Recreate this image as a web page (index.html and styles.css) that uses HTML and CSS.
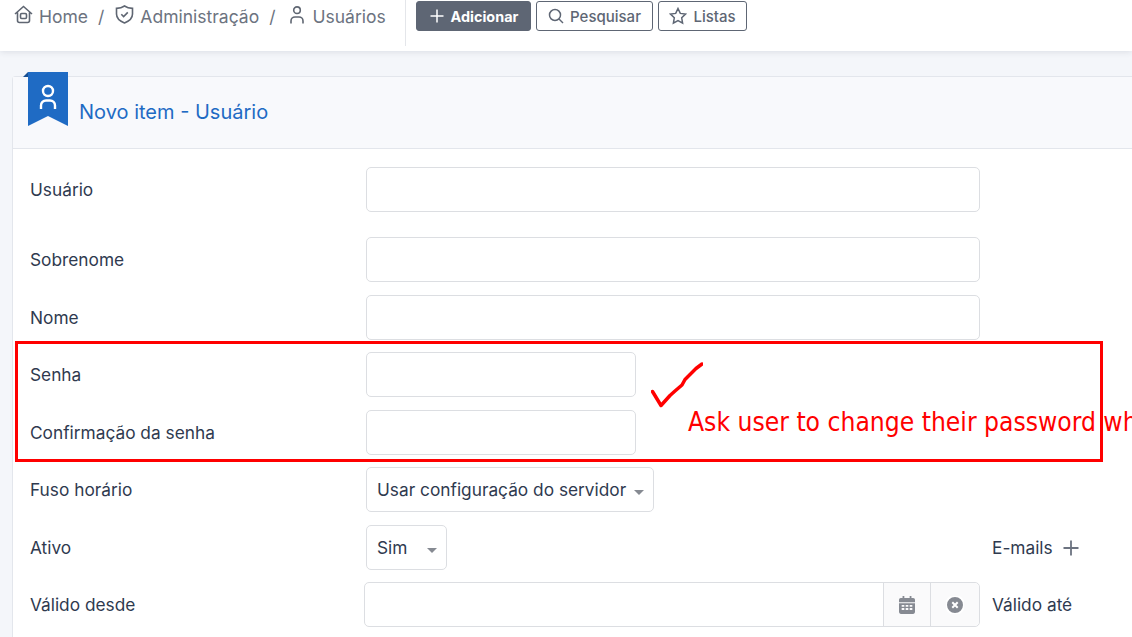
FILE: index.html
```html
<!DOCTYPE html>
<html lang="pt">
<head>
<meta charset="utf-8">
<title>Novo item - Usuário</title>
<link rel="stylesheet" href="styles.css">
</head>
<body>
<header class="topbar">
  <nav class="crumbs">
    <span class="crumb">
      <svg class="crumb-icon" viewBox="0 0 19 19"><path d="M1 9 9.500 1.500 18 9M3.500 7.500v8a2 2 0 0 0 2 2h8a2 2 0 0 0 2-2v-8"/><rect x="6.500" y="8.500" width="6" height="5" rx="1.200"/></svg>
      Home</span>
    <span class="sep sep-a">/</span>
    <span class="crumb">
      <svg class="crumb-icon" viewBox="0 0 19 19"><path d="M9.500 1c2.200 1.500 4.800 2.300 8 2.400v5.600c0 4-3 7-8 9-5-2-8-5-8-9V3.400c3.200-.1 5.800-.9 8-2.400z"/><path d="m6.300 9.300 2.300 2.300 4.200-4.200"/></svg>
      Administração</span>
    <span class="sep sep-b">/</span>
    <span class="crumb crumb-user">
      <svg class="crumb-icon person" viewBox="0 0 14 18"><circle cx="7" cy="4.200" r="3.300"/><path d="M1 17.500v-2.500a4 4 0 0 1 4-4h4a4 4 0 0 1 4 4v2.500"/></svg>
      Usuários</span>
  </nav>
  <div class="actions">
    <button class="btn btn-primary"><svg class="btn-icon" viewBox="0 0 16 16"><path d="M8 1.500v13M1.500 8h13"/></svg>Adicionar</button>
    <button class="btn btn-search"><svg class="btn-icon" viewBox="0 0 16 16"><circle cx="7" cy="7" r="5.500"/><path d="m11 11 4 4"/></svg>Pesquisar</button>
    <button class="btn btn-lists"><svg class="btn-icon star" viewBox="0 0 18 18"><path d="m9 1.500 2.300 4.900 5.200.7-3.800 3.700.9 5.300L9 13.500l-4.600 2.600.9-5.300L1.500 7.100l5.200-.7z"/></svg>Listas</button>
  </div>
</header>

<main class="content">
  <section class="card">
    <i class="ribbon-fold"></i>
    <div class="ribbon">
      <svg viewBox="0 0 20 26" class="ribbon-icon"><circle cx="10" cy="7" r="5"/><path d="M3 25v-3.500a5 5 0 0 1 5-5h4a5 5 0 0 1 5 5V25"/></svg>
    </div>
    <div class="card-head"><h1>Novo item - Usuário</h1></div>
    <form class="form">
      <div class="row row-first"><label>Usuário</label><input class="field wide"></div>
      <div class="row"><label>Sobrenome</label><input class="field wide"></div>
      <div class="row"><label>Nome</label><input class="field wide"></div>
      <div class="row"><label>Senha</label><input class="field narrow" type="password"></div>
      <div class="row"><label>Confirmação da senha</label><input class="field narrow" type="password"></div>
      <div class="row"><label>Fuso horário</label><div class="field select tz">Usar configuração do servidor<i class="caret"></i></div></div>
      <div class="row"><label>Ativo</label><div class="field select yes">Sim<i class="caret"></i></div><span class="side side-mail">E-mails<svg class="plus" viewBox="0 0 16 16"><path d="M8 .5v15M.5 8h15"/></svg></span></div>
      <div class="row row-date"><label>Válido desde</label>
        <div class="field date">
          <span class="date-main"></span>
          <span class="date-btn"><svg viewBox="0 0 18 20" class="cal"><path d="M4 0h2v2h6V0h2v2h2a2 2 0 0 1 2 2v3H0V4a2 2 0 0 1 2-2h2zM0 8h18v10a2 2 0 0 1-2 2H2a2 2 0 0 1-2-2zm3 2v2h3v-2zm4.500 0v2h3v-2zM12 10v2h3v-2zM3 13.500v2h3v-2zm4.500 0v2h3v-2zm4.500 0v2h3v-2z" fill-rule="evenodd"/></svg></span>
          <span class="date-btn"><svg viewBox="0 0 18 18" class="clear"><circle cx="9" cy="9" r="9"/><path d="m6.300 6.300 5.400 5.400m0-5.400-5.400 5.400"/></svg></span>
        </div>
        <span class="side">Válido até</span>
      </div>
    </form>
  </section>
</main>

<div class="redbox"></div>
<svg class="tick" viewBox="0 0 52 46"><path d="M1.500 29.500 10 43.500 19 33.500 24 29 31 23 34 17.500 39 12.500 45 6.500 51 2"/></svg>
<div class="note">Ask user to change their password wh</div>
</body>
</html>
```
FILE: styles.css
```css
* { box-sizing: border-box; }
html, body { margin: 0; height: 637px; overflow: hidden; }
body {
  position: relative;
  background: #f4f6fa;
  font-family: Inter, "Liberation Sans", sans-serif;
  color: #2f3a4f;
}
.topbar {
  height: 51px;
  background: #fff;
  box-shadow: 0 1px 6px rgba(40, 50, 70, .12);
  display: flex;
  align-items: flex-start;
  padding-left: 14px;
}
.crumbs {
  width: 392px;
  height: 46px;
  border-right: 1px solid #e4e6ea;
  display: flex;
  align-items: flex-start;
  padding-top: 5px;
  color: #6c7380;
  font-size: 17.500px;
  line-height: 24px;
  white-space: nowrap;
}
.crumb { display: flex; align-items: flex-start; gap: 6px; }
.crumb-user { gap: 8px; }
.crumb-icon {
  width: 19px; height: 19px;
  fill: none;
  stroke: #5f6672;
  stroke-width: 1.600;
}
.person { width: 14px; height: 18px; margin-top: 1px; }
.sep-a { margin: 0 11px 0 10px; }
.sep-b { margin: 0 15px 0 10px; }
.actions { display: flex; gap: 5px; margin-left: 10px; padding-top: 1px; }
.btn {
  height: 30px;
  border: 1px solid #5e6674;
  border-radius: 3px;
  background: #fff;
  color: #5e6674;
  font: 500 15px Inter, "Liberation Sans", sans-serif;
  display: flex;
  align-items: center;
  justify-content: center;
  gap: 6px;
  padding: 0;
}
.btn-primary { width: 115px; background: #5e6674; color: #fff; font-weight: 700; font-size: 14.400px; }
.btn-search { width: 117px; }
.btn-lists { width: 89px; }
.btn-icon { width: 16px; height: 16px; fill: none; stroke: currentColor; stroke-width: 1.500; }
.star { width: 18px; height: 18px; }

.content { padding: 25px 0 0 12px; }
.card {
  position: relative;
  width: 1120px;
  background: #fff;
  border: 1px solid #e3e6ec;
  border-right: 0;
  border-bottom: 0;
  border-radius: 4px 0 0 0;
  padding-bottom: 10px;
}
.card-head {
  height: 72px;
  background: #f8f9fc;
  border-bottom: 1px solid #e3e6ec;
  padding: 22px 0 0 66px;
}
.card-head h1 {
  margin: 0;
  font-size: 20px;
  line-height: 26px;
  font-weight: 400;
  color: #1f6bc4;
}
.ribbon-fold {
  position: absolute;
  left: 10px;
  top: -5px;
  border-bottom: 5px solid #174f92;
  border-left: 5px solid transparent;
}
.ribbon {
  position: absolute;
  left: 15px;
  top: -5px;
  width: 40px;
  height: 54px;
  background: #1f6bc4;
  clip-path: polygon(0 0, 100% 0, 100% 100%, 50% 81.500%, 0 100%);
  display: flex;
  justify-content: center;
  padding-top: 12px;
}
.ribbon-icon { width: 20px; height: 26px; fill: none; stroke: #fff; stroke-width: 2.400; }
.form { padding-top: 6px; }
.row {
  position: relative;
  height: 45px;
  margin-top: 12.500px;
  display: flex;
  align-items: center;
  font-size: 17.300px;
}
.row-first { margin-top: 12px; margin-bottom: 25px; }
.row-first + .row { margin-top: 0; }
.row label { width: 353px; padding-left: 17px; flex: none; }
.field {
  height: 45px;
  background: #fff;
  border: 1px solid #dcdee2;
  border-radius: 5px;
  font-size: 17.300px;
  color: #2f3a4f;
  outline: none;
}
.wide { width: 614px; }
.narrow { width: 270px; }
.select {
  display: flex;
  align-items: center;
  padding-left: 10px;
  position: relative;
}
.tz { width: 288px; }
.yes { width: 81px; }
.caret {
  position: absolute;
  right: 9px;
  top: 22px;
  border-left: 5px solid transparent;
  border-right: 5px solid transparent;
  border-top: 5px solid #868a92;
}
.side { position: absolute; left: 979px; top: 12px; line-height: 22px; display: flex; align-items: center; gap: 10px; }
.plus { width: 16px; height: 16px; fill: none; stroke: #6c7380; stroke-width: 1.800; }
.row-date label { width: 351px; }
.date { width: 616px; display: flex; }
.date-main { flex: 1; }
.date-btn {
  width: 47px;
  flex: none;
  border-left: 1px solid #dcdee2;
  background: #fafafb;
  display: flex;
  align-items: center;
  justify-content: center;
}
.date-btn:last-child { width: 49px; border-radius: 0 5px 5px 0; }
.cal { width: 16px; height: 18px; fill: #868a92; }
.clear { width: 18px; height: 18px; fill: #868a92; stroke: #fff; stroke-width: 2; }

.redbox {
  position: absolute;
  left: 15px;
  top: 341px;
  width: 1088px;
  height: 121px;
  border: 3px solid #f00;
}
.tick {
  position: absolute;
  left: 651px;
  top: 362px;
  width: 52px;
  height: 46px;
  fill: none;
  stroke: #f00;
  stroke-width: 3.500;
  stroke-linejoin: round;
  stroke-linecap: round;
}
.note {
  position: absolute;
  left: 688px;
  top: 404px;
  font-family: "DejaVu Sans", sans-serif;
  font-stretch: condensed;
  font-size: 26.200px;
  line-height: 36px;
  color: #f00;
  white-space: nowrap;
}
```
